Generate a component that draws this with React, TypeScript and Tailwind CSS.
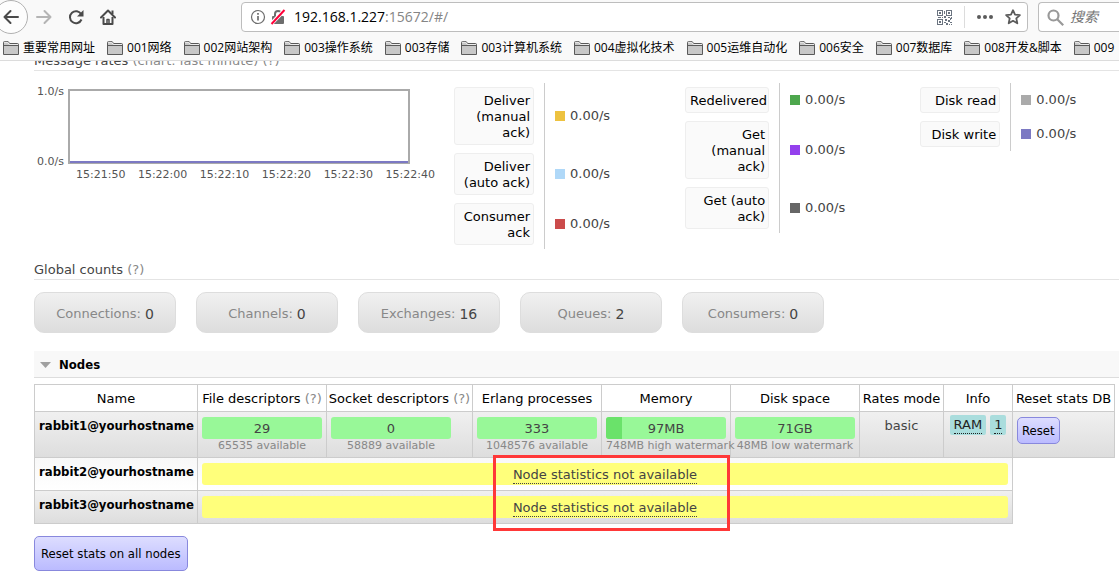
import type { ReactNode } from "react";
import clsx from "clsx";

const bookmarks = [
  "重要常用网址",
  "001网络",
  "002网站架构",
  "003操作系统",
  "003存储",
  "003计算机系统",
  "004虚拟化技术",
  "005运维自动化",
  "006安全",
  "007数据库",
  "008开发&脚本",
  "009",
];

const ticks = ["15:21:50", "15:22:00", "15:22:10", "15:22:20", "15:22:30", "15:22:40"];

const legends = [
  {
    width: "w-20",
    rows: [
      { label: "Deliver (manual ack)", color: "bg-[#edc240]" },
      { label: "Deliver (auto ack)", color: "bg-[#afd8f8]" },
      { label: "Consumer ack", color: "bg-[#cb4b4b]" },
    ],
  },
  {
    width: "w-21",
    rows: [
      { label: "Redelivered", color: "bg-[#4da74d]" },
      { label: "Get (manual ack)", color: "bg-[#9440ed]" },
      { label: "Get (auto ack)", color: "bg-[#666666]" },
    ],
  },
  {
    width: "w-20",
    rows: [
      { label: "Disk read", color: "bg-[#aaaaaa]" },
      { label: "Disk write", color: "bg-[#7c79c3]" },
    ],
  },
];

const counts = [
  { label: "Connections", value: 0 },
  { label: "Channels", value: 0 },
  { label: "Exchanges", value: 16 },
  { label: "Queues", value: 2 },
  { label: "Consumers", value: 0 },
];

const columns = [
  { name: "Name", width: "w-[163px]" },
  { name: "File descriptors", width: "w-[129px]", help: true },
  { name: "Socket descriptors", width: "w-[146px]", help: true },
  { name: "Erlang processes", width: "w-[129px]" },
  { name: "Memory", width: "w-[129px]" },
  { name: "Disk space", width: "w-[129px]" },
  { name: "Rates mode", width: "w-[84px]" },
  { name: "Info", width: "w-[69px]" },
  { name: "Reset stats DB", width: "w-[102px]" },
];

const usage = [
  { value: "29", note: "65535 available", used: 0 },
  { value: "0", note: "58889 available", used: 0 },
  { value: "333", note: "1048576 available", used: 0 },
  { value: "97MB", note: "748MB high watermark", used: 13 },
  { value: "71GB", note: "48MB low watermark", used: 0 },
];

const Folder = () => (
  <svg width="16" height="14" viewBox="0 0 16 14" className="shrink-0">
    <path d="M.5 13.5V1.5q0-1 1-1h3.6l1.6 2h7.8q1 0 1 1v10z" fill="#c8c8c8" stroke="#5a5a5a" />
    <path d="M1 4.5h14" stroke="#5a5a5a" />
    <path d="M1.2 1.3h3.5l1.6 2.2H15" stroke="#ededed" fill="none" />
  </svg>
);

const Toolbar = () => (
  <div className="flex h-[34px] items-center">
    <button
      aria-label="Back"
      className="-ml-1.5 flex size-[34px] shrink-0 items-center justify-center rounded-full border border-[#b1b1b1] bg-[#fdfdfd]"
    >
      <svg width="16" height="16" viewBox="0 0 16 16" fill="none" stroke="#4a4a4a" strokeWidth="2" strokeLinecap="round" strokeLinejoin="round">
        <path d="M15 8H1.5M7.5 2l-6 6 6 6" />
      </svg>
    </button>
    <button aria-label="Forward" className="ml-2">
      <svg width="16" height="16" viewBox="0 0 16 16" fill="none" stroke="#b4b4b4" strokeWidth="2" strokeLinecap="round" strokeLinejoin="round">
        <path d="M1 8h13.500M8.500 2l6 6-6 6" />
      </svg>
    </button>
    <button aria-label="Reload" className="ml-4">
      <svg width="16" height="16" viewBox="0 0 16 16" fill="none" stroke="#4a4a4a" strokeWidth="2">
        <path d="M13.200 5.200A6 6 0 1 0 13.500 10.500" />
        <path d="M15.500 1v6.500H9z" fill="#4a4a4a" stroke="none" />
      </svg>
    </button>
    <button aria-label="Home" className="ml-4">
      <svg width="16" height="16" viewBox="0 0 16 16" fill="none" stroke="#4a4a4a" strokeWidth="2" strokeLinejoin="round">
        <path d="M1 8.500 8 1.500l7 7" strokeLinecap="round" />
        <path d="M3.500 8v7h9V8" />
        <path d="M7 15v-4.500h2V15" strokeWidth="1.500" />
        <path d="M12.500 1.500V5" />
      </svg>
    </button>

    <div className="ml-[125px] flex h-[30px] min-w-0 grow items-center rounded-sm border border-[#bdbdbd] bg-white pl-2 pr-1.5">
      <svg width="16" height="16" viewBox="0 0 16 16" fill="none" stroke="#6d6d6d" className="shrink-0">
        <circle cx="8" cy="8" r="6.500" strokeWidth="1.200" />
        <path d="M8 7v4.500M8 4v1.700" strokeWidth="1.700" />
      </svg>
      <svg width="16" height="16" viewBox="0 0 16 16" className="ml-1 shrink-0">
        <path d="M5 8V5a3 3 0 0 1 6 0v3" fill="none" stroke="#6d6d6d" strokeWidth="2" />
        <rect x="2" y="7" width="12" height="8" rx="1" fill="#6d6d6d" />
        <path d="M1 15 14.500 1" stroke="#fff" strokeWidth="4" />
        <path d="M1.500 15 14.500 1" stroke="#ff0039" strokeWidth="2" />
      </svg>
      <div className="ml-2 grow whitespace-nowrap font-['Open_Sans','Noto_Sans',sans-serif] text-sm text-black">
        192.168.1.227<span className="text-[#858585]">:15672/#/</span>
      </div>
      <svg width="15" height="15" viewBox="0 0 15 15" fill="#6b7480" className="shrink-0">
        <path fillRule="evenodd" d="M0 0h6v6H0zM1 1v4h4V1zM9 0h6v6H9zM10 1v4h4V1zM0 9h6v6H0zM1 10v4h4v-4z" />
        <path d="M2 2h2v2H2zM11 2h2v2h-2zM2 11h2v2H2zM7 1h1v3H7zM7 6h2v2H7zM1 7h3v1H1zM5 7h1v1H5zM11 7h2v1h-2zM14 7h1v2h-1zM8 9h2v2H8zM11 10h2v2h-2zM13 8h1v2h-1zM7 12h2v1H7zM9 13h2v2H9zM13 12h2v1h-2zM12 14h1v1h-1zM14 14h1v1h-1z" />
      </svg>
      <div className="ml-3 h-[22px] w-px bg-[#dcdcdc]" />
      <button aria-label="Page actions" className="ml-3">
        <svg width="16" height="16" viewBox="0 0 16 16" fill="#5b5b5b">
          <circle cx="2" cy="8" r="2" />
          <circle cx="8" cy="8" r="2" />
          <circle cx="14" cy="8" r="2" />
        </svg>
      </button>
      <button aria-label="Bookmark this page" className="ml-3">
        <svg width="16" height="16" viewBox="0 0 16 16" fill="none" stroke="#5b5b5b" strokeWidth="1.800" strokeLinejoin="round">
          <path d="m8 1.200 2 4.400 4.900.5-3.600 3.300 1 4.900L8 11.800l-4.300 2.500 1-4.900L1.100 6.100 6 5.600z" />
        </svg>
      </button>
    </div>

    <label className="ml-2.5 flex h-[30px] w-[81px] shrink-0 items-center rounded-l-sm border border-r-0 border-[#bdbdbd] bg-white pl-2">
      <svg width="17" height="17" viewBox="0 0 17 17" fill="none" stroke="#999" strokeWidth="2.200" className="shrink-0">
        <circle cx="6.500" cy="6.500" r="5" />
        <path d="m10.200 10.200 6 6" />
      </svg>
      <input
        aria-label="搜索"
        placeholder="搜索"
        className="ml-1.5 w-full min-w-0 bg-transparent font-['Open_Sans','Noto_Sans_CJK_SC',sans-serif] text-sm italic outline-none placeholder:text-[#757575]"
      />
    </label>
  </div>
);

const SectionTitle = ({ className, children }: { className?: string; children: ReactNode }) => (
  <h2 className={clsx("border-b border-[#e4e4e4] py-px leading-4 text-[#444]", className)}>{children}</h2>
);

const Help = () => (
  <a href="#help" className="text-[#888]">
    (?)
  </a>
);

const RateChart = () => (
  <div className="mt-[3px] w-[420px] shrink-0 text-[11px] leading-3 text-[#545454]">
    <div className="flex">
      <div className="flex w-[34px] flex-col justify-between pr-1 text-right">
        <span>1.0/s</span>
        <span>0.0/s</span>
      </div>
      <svg width="342" height="75" viewBox="0 0 342 75" fill="none" className="mb-1 mt-[3px]">
        <rect x="1" y="1" width="340" height="73" stroke="#aaa" strokeWidth="2" />
        <path d="M2 73h338" stroke="#7c79c3" strokeWidth="2" />
      </svg>
    </div>
    <div className="ml-[42px] mt-px flex w-[359px] justify-between">
      {ticks.map((tick) => (
        <span key={tick}>{tick}</span>
      ))}
    </div>
  </div>
);

const Bar = ({ className, children }: { className?: string; children: ReactNode }) => (
  <div className={clsx("relative h-[22px] overflow-hidden rounded-[3px] text-center leading-6 text-[#444]", className)}>
    {children}
  </div>
);

const cell = "border border-[#ccc] px-1 py-[5px] align-top";
const textCell = "border border-[#ccc] px-1 pt-1.5 pb-1 align-top";
const nameCell = "text-left font-['DejaVu_Sans_Condensed','DejaVu_Sans',sans-serif] font-bold text-black";
const gray = "bg-linear-to-b from-[#f0f0f0] to-[#dddddd]";
const button =
  "rounded-[5px] border border-[#8888dd] bg-linear-to-b from-[#ddddff] to-[#bbbbff] font-['DejaVu_Sans_Condensed','Open_Sans',sans-serif] text-[13px] leading-4 text-black";

const NodesTable = () => (
  <div className="relative mt-1.5">
    <table className="w-[1081px] table-fixed border-collapse">
      <thead>
        <tr>
          {columns.map((col) => (
            <th
              key={col.name}
              className={clsx("h-[27px] whitespace-nowrap border border-[#ccc] pt-0.5 font-normal text-black", col.width)}
            >
              {col.name} {col.help && <Help />}
            </th>
          ))}
        </tr>
      </thead>
      <tbody>
        <tr className={gray}>
          <th className={clsx(textCell, nameCell)}>rabbit1@yourhostname</th>
          {usage.map((item) => (
            <td key={item.note} className={cell}>
              <div className="w-[120px]">
                <Bar className="bg-[#98f898]">
                  <div className="absolute inset-y-0 left-0 bg-[#6ae26a]" style={{ width: `${item.used}%` }} />
                  <span className="relative">{item.value}</span>
                </Bar>
                <div className="flex justify-center-safe whitespace-nowrap text-[11px] leading-[13px] text-[#888]">{item.note}</div>
              </div>
            </td>
          ))}
          <td className={clsx(textCell, "text-center text-[#444]")}>basic</td>
          <td className="border border-[#ccc] px-1 py-[3px] align-top">
            <div className="flex justify-center gap-1 text-[#222]">
              {["RAM", "1"].map((tag) => (
                <span key={tag} className="rounded-xs bg-[#aadddd] px-1 pb-px pt-0.5">
                  <abbr className="block border-b border-dotted border-[#222] leading-4 no-underline">{tag}</abbr>
                </span>
              ))}
            </div>
          </td>
          <td className={cell}>
            <button className={clsx(button, "block h-[27px] px-1")}>Reset</button>
          </td>
        </tr>
        {/* nodes that are down have no reset button, so their rows stop at Info */}
        {["rabbit2@yourhostname", "rabbit3@yourhostname"].map((name, i) => (
          <tr key={name} className={i === 1 ? gray : "bg-linear-to-b from-[#f8f8f8] to-white"}>
            <th className={clsx(textCell, nameCell)}>{name}</th>
            <td colSpan={7} className={cell}>
              <Bar className="bg-[#ffff7b]">
                <span className="inline-block border-b border-dotted border-[#444] leading-4">Node statistics not available</span>
              </Bar>
            </td>
          </tr>
        ))}
      </tbody>
    </table>
    <div className="pointer-events-none absolute left-[459px] top-[71px] h-[76px] w-[237px] border-3 border-[#ff3838]" />
  </div>
);

export default function App() {
  return (
    <div className="overflow-hidden bg-white font-['DejaVu_Sans',Verdana,sans-serif] text-[13px] leading-4">
      <header className="relative border-b border-[#dcdcdc] bg-[#f9f9f9]">
        <Toolbar />
        <nav className="flex h-[26px] items-center gap-3 overflow-hidden pl-[3px] pt-0.5 font-['Open_Sans','Noto_Sans_CJK_SC',sans-serif] text-xs leading-4 text-black">
          {bookmarks.map((name) => (
            <a key={name} href="#bookmark" className="flex shrink-0 items-center gap-1 whitespace-nowrap">
              <Folder />
              {name}
            </a>
          ))}
        </nav>
      </header>

      {/* scrolled a little, the first title sits partly under the bookmarks */}
      <main className="overflow-hidden pb-3 pl-[34px]">
        <SectionTitle className="-mt-[9px]">
          Message rates <span className="text-[#888]">(chart: last minute)</span> <Help />
        </SectionTitle>

        <div className="flex items-start pt-3">
          <RateChart />
          <div className="flex items-start gap-[75px]">
            {legends.map((legend) => (
              <table key={legend.rows[0].label}>
                <tbody>
                  {legend.rows.map((row) => (
                    <tr key={row.label}>
                      <th className="py-1 pr-2.5 font-normal">
                        <div
                          className={clsx(
                            "rounded-[3px] border border-[#eee] bg-[#fafafa] pb-[3px] pl-1 pr-[3px] pt-[5px] text-right text-black",
                            legend.width,
                          )}
                        >
                          {row.label}
                        </div>
                      </th>
                      <td className="border-l border-[#ccc] pl-2.5 text-[#444]">
                        <div className="flex items-center gap-[5px]">
                          <span className={clsx("size-2.5", row.color)} />
                          0.00/s
                        </div>
                      </td>
                    </tr>
                  ))}
                </tbody>
              </table>
            ))}
          </div>
        </div>

        <SectionTitle className="mt-3">
          Global counts <Help />
        </SectionTitle>
        <div className="mt-3 flex gap-5">
          {counts.map((count) => (
            <div
              key={count.label}
              className="flex h-[41px] w-[142px] items-center justify-center gap-1 rounded-[10px] border border-[#ddd] bg-linear-to-b from-[#f0f0f0] to-[#dddddd] pt-0.5 text-[#888]"
            >
              {count.label}: <span className="text-sm leading-4 text-[#444]">{count.value}</span>
            </div>
          ))}
        </div>

        <h2 className="mt-[18px] flex h-[27px] items-center gap-2 border-b border-[#ddd] bg-[#f8f8f8] pl-1.5 pt-px font-['DejaVu_Sans_Condensed','DejaVu_Sans',sans-serif] font-bold text-black">
          <svg width="11" height="6" viewBox="0 0 11 6" fill="#a0a0a0">
            <path d="M0 0h11L5.500 6z" />
          </svg>
          Nodes
        </h2>
        <NodesTable />

        <button className={clsx(button, "mt-3 h-[35px] px-1.5")}>Reset stats on all nodes</button>
      </main>
    </div>
  );
}
